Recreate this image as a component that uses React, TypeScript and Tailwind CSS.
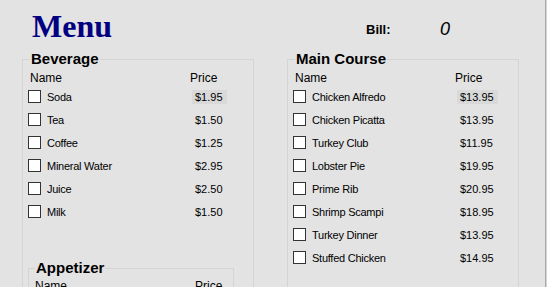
import React from 'react';

interface Item {
  name: string;
  price: string;
}

const beverages: Item[] = [
  { name: 'Soda', price: '$1.95' },
  { name: 'Tea', price: '$1.50' },
  { name: 'Coffee', price: '$1.25' },
  { name: 'Mineral Water', price: '$2.95' },
  { name: 'Juice', price: '$2.50' },
  { name: 'Milk', price: '$1.50' },
];

const mains: Item[] = [
  { name: 'Chicken Alfredo', price: '$13.95' },
  { name: 'Chicken Picatta', price: '$13.95' },
  { name: 'Turkey Club', price: '$11.95' },
  { name: 'Lobster Pie', price: '$19.95' },
  { name: 'Prime Rib', price: '$20.95' },
  { name: 'Shrimp Scampi', price: '$18.95' },
  { name: 'Turkey Dinner', price: '$13.95' },
  { name: 'Stuffed Chicken', price: '$14.95' },
];

const ColumnHeader: React.FC = () => (
  <div className="flex pt-[4px] text-[12px] leading-[14px] text-black">
    <span className="w-[160px]">Name</span>
    <span>Price</span>
  </div>
);

const ItemRow: React.FC<{ item: Item; focused?: boolean }> = ({ item, focused }) => (
  <div className="-ml-[2px] flex h-[23px] items-center text-[11px] leading-[14px] text-black">
    <span className="h-[13px] w-[13px] flex-none border border-[#333333] bg-white" />
    <span className="ml-[6px] w-[145px] tracking-[-0.25px]">{item.name}</span>
    <span className={`pl-[3px] pr-[4px] ${focused ? 'bg-[#d9d9d9]' : ''}`}>{item.price}</span>
  </div>
);

const Group: React.FC<{ title: string; className?: string; children: React.ReactNode }> = ({ title, className, children }) => (
  <fieldset className={`border border-[#d4d4d4] ${className ?? ''}`}>
    <legend className="px-[1px] text-[15px] font-bold leading-[16px] text-black">{title}</legend>
    {children}
  </fieldset>
);

export default function App() {
  return (
    <div className="flex h-[287px] w-[547px] overflow-hidden bg-[#e3e3e3] font-['Liberation_Sans',Arial,sans-serif]">
      <div className="flex w-[545px] flex-col">
        <div className="flex h-[52px] items-start">
          <div className="w-[366px] pl-[32px] pt-[8px]">
            <h1 className="font-['Liberation_Serif','Times_New_Roman',serif] text-[32px] font-bold leading-[36px] text-[#000080]">Menu</h1>
          </div>
          <span className="w-[74px] pt-[22px] text-[13px] font-bold leading-[16px] text-black">Bill:</span>
          <span className="pt-[19px] text-[18px] italic leading-[20px] text-black">0</span>
        </div>

        <div className="mt-[7px] flex gap-[33px] pl-[22px]">
          <Group title="Beverage" className="h-[260px] w-[232px] pl-[7px]">
            <ColumnHeader />
            {beverages.map((b, i) => (
              <ItemRow key={b.name} item={b} focused={i === 0} />
            ))}
            <Group title="Appetizer" className="-ml-[2px] mt-[37px] h-[80px] w-[206px] pl-[6px]">
              <div className="flex pt-[3px] text-[12px] leading-[14px] text-black">
                <span className="w-[160px]">Name</span>
                <span>Price</span>
              </div>
            </Group>
          </Group>

          <Group title="Main Course" className="h-[260px] w-[232px] pl-[7px]">
            <ColumnHeader />
            {mains.map((m, i) => (
              <ItemRow key={m.name} item={m} focused={i === 0} />
            ))}
          </Group>
        </div>
      </div>
      <div className="w-[2px] flex-none border-l border-[#a8a8a8] bg-[#d6d6d6]" />
    </div>
  );
}
